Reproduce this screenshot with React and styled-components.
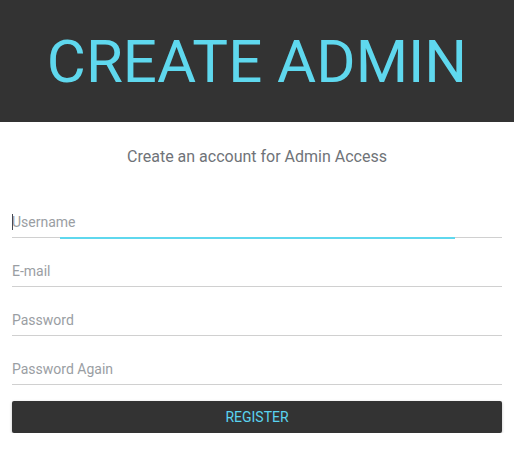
import React from "react";
import styled, { createGlobalStyle } from "styled-components";

const Global = createGlobalStyle`
  html, body { margin: 0; padding: 0; background: #fff; }
  body { font-family: Roboto, "Liberation Sans", sans-serif; }
  * { box-sizing: border-box; }
`;

const Header = styled.header`
  height: 122px;
  background: #333333;
  display: flex;
  align-items: center;
  justify-content: center;
`;

const Title = styled.h1`
  margin: 0;
  font-family: Roboto, sans-serif;
  font-weight: 400;
  font-size: 60px;
  line-height: 1;
  color: #5fd8ee;
  padding-top: 2px;
`;

const Subtitle = styled.p`
  margin: 25px 0 0;
  text-align: center;
  font-size: 16px;
  line-height: 20px;
  color: #6f7378;
`;

const Form = styled.form`
  display: flex;
  flex-direction: column;
  gap: 17px;
  padding: 39px 12px 0;
`;

const Field = styled.div`
  position: relative;
  height: 32px;
`;

const Input = styled.input`
  display: block;
  width: 100%;
  height: 32px;
  border: none;
  border-bottom: 1px solid #d0d0d0;
  outline: none;
  padding: 0;
  font-family: Roboto, sans-serif;
  font-size: 14px;
  color: #333;
  caret-color: #333;
  background: transparent;
  &::placeholder { color: #9a9ea3; }
`;

const Caret = styled.span`
  position: absolute;
  left: 0;
  top: 8px;
  width: 1px;
  height: 16px;
  background: #444a55;
  pointer-events: none;
`;

const FocusBar = styled.span`
  position: absolute;
  left: 48px;
  right: 47px;
  bottom: -1px;
  height: 2px;
  background: #5fd8ee;
`;

const Button = styled.button`
  margin-top: -1px;
  height: 32px;
  border: none;
  border-radius: 2px;
  background: #333333;
  color: #5ad4f0;
  font-family: Roboto, sans-serif;
  font-size: 14px;
  text-transform: uppercase;
  box-shadow: 0 1px 3px rgba(0,0,0,0.25);
  cursor: pointer;
`;

const fields = [
  { ph: "Username", type: "text", focus: true },
  { ph: "E-mail", type: "email" },
  { ph: "Password", type: "password" },
  { ph: "Password Again", type: "password" },
];

export default function App() {
  return (
    <>
      <Global />
      <Header>
        <Title>CREATE ADMIN</Title>
      </Header>
      <Subtitle>Create an account for Admin Access</Subtitle>
      <Form onSubmit={(e) => e.preventDefault()}>
        {fields.map((f) => (
          <Field key={f.ph}>
            <Input type={f.type} placeholder={f.ph} />
            {f.focus && <Caret />}
            {f.focus && <FocusBar />}
          </Field>
        ))}
        <Button type="submit">Register</Button>
      </Form>
    </>
  );
}
